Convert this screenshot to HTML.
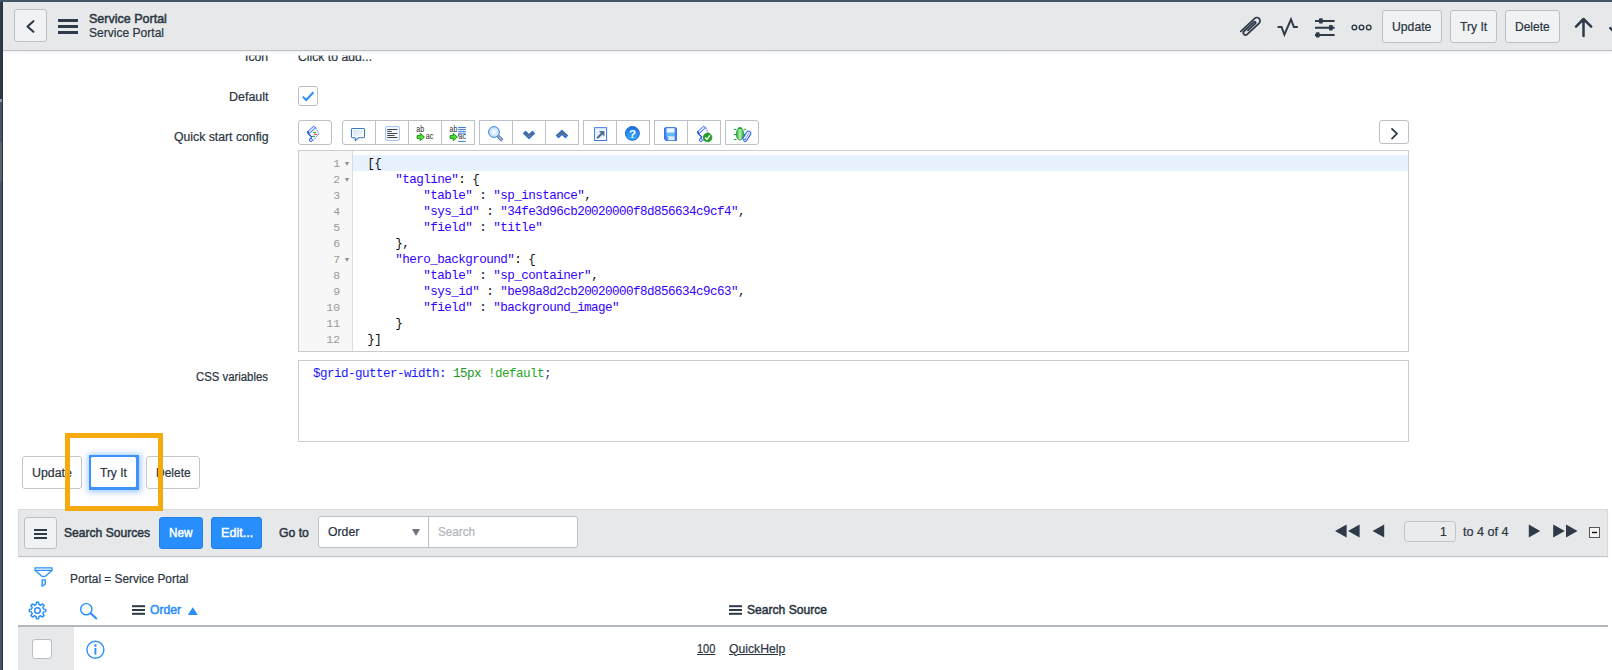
<!DOCTYPE html>
<html lang="en">
<head>
<meta charset="utf-8">
<title>Service Portal</title>
<style>
html,body{margin:0;padding:0;}
body{width:1612px;height:670px;overflow:hidden;background:#fff;position:relative;
  font-family:"Liberation Sans",sans-serif;color:#2e3a47;font-size:12px;}
.abs{position:absolute;}
.t{position:absolute;white-space:nowrap;line-height:1;transform-origin:0 0;}
svg{position:absolute;overflow:visible;}
/* chrome strips */
#topstrip{left:0;top:0;width:1612px;height:2px;background:#455464;}
#leftstrip{left:0;top:2px;width:3px;height:668px;background:#2f3a46;}
/* header */
#hdr{left:3px;top:2px;width:1609px;height:48px;background:#e6e8ea;border-bottom:1px solid #bdc0c4;}
#hdrshadow{left:3px;top:51px;width:1609px;height:3px;background:linear-gradient(#f0f1f2,#fff);}
.hbtn{position:absolute;box-sizing:border-box;border:1px solid #bbc0c6;border-radius:3px;background:#f1f2f4;}
/* form */
.btn{position:absolute;box-sizing:border-box;border:1px solid #c4c8cc;border-radius:3px;background:#fff;}
.tb{position:absolute;box-sizing:border-box;border:1px solid #bdc0c4;background:#fff;top:120px;height:25px;width:34px;}
.mono{font-family:"Liberation Mono",monospace;font-size:12.6px;letter-spacing:-0.56px;white-space:pre;line-height:16px;margin:0;}
.s{color:#3300ff;}
.ln{position:absolute;left:299px;width:41.2px;text-align:right;color:#999;font-size:11.5px;letter-spacing:0.1px;}
</style>
</head>
<body>
<div class="abs" id="topstrip"></div>
<div class="abs" id="leftstrip"></div>
<div class="abs" style="left:0;top:99px;width:2px;height:3px;background:#8d97a3;"></div>
<div class="abs" style="left:0;top:102px;width:2px;height:568px;background:#455569;"></div>
<div class="abs" style="left:0;top:141.5px;width:2px;height:39.7px;background:#58626c;"></div>
<div class="abs" style="left:2px;top:2px;width:1px;height:668px;background:#263141;"></div>
<div class="abs" id="hdr"></div>
<div class="abs" id="hdrshadow"></div>

<!-- header left -->
<div class="hbtn" style="left:14px;top:9px;width:33px;height:33px;"></div>
<svg style="left:14px;top:9px;" width="33" height="33" viewBox="0 0 33 33"><path d="M19.4 12.2 L13.5 17.5 L19.4 22.8" fill="none" stroke="#2e3a47" stroke-width="2.1" stroke-linecap="round" stroke-linejoin="round"/></svg>
<div class="abs" style="left:58px;top:19px;width:20px;height:3px;background:#2e3a47;"></div>
<div class="abs" style="left:58px;top:25px;width:20px;height:3px;background:#2e3a47;"></div>
<div class="abs" style="left:58px;top:31px;width:20px;height:3px;background:#2e3a47;"></div>

<!-- header right buttons -->
<div class="hbtn" style="left:1382px;top:10px;width:60px;height:33px;"></div>
<div class="hbtn" style="left:1450px;top:10px;width:47px;height:33px;"></div>
<div class="hbtn" style="left:1505px;top:10px;width:55px;height:33px;"></div>
<svg style="left:0;top:0;" width="1612" height="60" viewBox="0 0 1612 60" fill="none" stroke="#2e3a47" stroke-linecap="round" stroke-linejoin="round">
<g transform="translate(1250.7,26.6) rotate(-43)" stroke-width="1.75"><path d="M-10.4 -3.3 H8.3 A3.3 3.3 0 0 1 8.3 3.3 H-8 A2.2 2.2 0 0 1 -8 -1.1 H5.6 A1 1 0 0 1 5.6 0.9 H-4.5"/></g>
<polyline points="1277.6,27 1281.5,27 1284.4,34.6 1291,19.4 1293.9,27 1297.8,27" stroke-width="2" stroke-linecap="butt" stroke-linejoin="miter"/>
<g stroke-width="2" stroke-linecap="butt"><path d="M1315 20.9H1334.6M1315 27.7H1334.6M1315 34.9H1334.6"/></g>
<g fill="#2e3a47" stroke="none"><rect x="1319" y="18.2" width="3.8" height="5.4" rx="0.8"/><rect x="1329" y="25" width="3.8" height="5.4" rx="0.8"/><rect x="1315.8" y="32.2" width="3.8" height="5.4" rx="0.8"/></g>
<g stroke-width="1.4"><circle cx="1354.4" cy="27.4" r="2.3"/><circle cx="1361.5" cy="27.4" r="2.3"/><circle cx="1368.7" cy="27.4" r="2.3"/></g>
<path d="M1583.5 36 V19.2 M1576 26.6 L1583.5 19 L1591.2 26.6" stroke-width="2.5"/>
<path d="M1618 18.5 V35.8 M1610.4 28.2 L1618 35.8 L1625.6 28.2" stroke-width="2.5"/>
</svg>

<!-- form -->
<div class="btn" style="left:298px;top:86px;width:20px;height:20px;border-color:#b9bec4;"></div>
<svg style="left:298px;top:86px;" width="20" height="20" viewBox="0 0 20 20"><path d="M4.8 10.6 L8.2 14 L15.4 6.2" fill="none" stroke="#278efc" stroke-width="2"/></svg>

<!-- toolbar -->
<div class="tb" style="left:298px;border-radius:3px;"></div>
<div class="tb" style="left:342px;border-radius:3px 0 0 3px;"></div>
<div class="tb" style="left:375px;"></div>
<div class="tb" style="left:408px;"></div>
<div class="tb" style="left:441px;"></div>
<div class="tb" style="left:479px;"></div>
<div class="tb" style="left:512px;"></div>
<div class="tb" style="left:545px;"></div>
<div class="tb" style="left:583px;"></div>
<div class="tb" style="left:616px;"></div>
<div class="tb" style="left:654px;"></div>
<div class="tb" style="left:687px;"></div>
<div class="tb" style="left:725px;border-radius:0 3px 3px 0;"></div>
<!--TBICONS_START--><svg style="left:0;top:0;" width="1612" height="160" viewBox="0 0 1612 160">
<defs>
<linearGradient id="gbub" x1="0" y1="0" x2="1" y2="1"><stop offset="0" stop-color="#cfe0f6"/><stop offset="1" stop-color="#ffffff"/></linearGradient>
<radialGradient id="glens" cx="0.5" cy="0.5" r="0.6"><stop offset="0" stop-color="#ffffff"/><stop offset="1" stop-color="#a9d3ff"/></radialGradient>
<linearGradient id="ghelp" x1="0" y1="0" x2="0" y2="1"><stop offset="0" stop-color="#1a6fe2"/><stop offset="1" stop-color="#35b2ff"/></linearGradient>
<linearGradient id="gchev" x1="0" y1="0" x2="0" y2="1"><stop offset="0" stop-color="#555"/><stop offset="1" stop-color="#888"/></linearGradient>
<linearGradient id="gbug" x1="0" y1="0" x2="1" y2="0"><stop offset="0" stop-color="#1fa12f"/><stop offset="0.5" stop-color="#b8f2b0"/><stop offset="1" stop-color="#1fa12f"/></linearGradient>
<g id="scroll">
 <path d="M1 6.8 L8.8 1.6 L11.9 7.9 L5.6 14.8 L4 13.6 L4.6 11.2 Z" fill="#f6f9ff"/>
 <path d="M8.9 1.9 L11.9 7.9 L5.9 14.9" fill="none" stroke="#4b78f5" stroke-width="0.9" stroke-dasharray="1.7 0.7"/>
 <path d="M0.7 7 L4.7 11.1 L2.8 13.1" fill="none" stroke="#1d46d8" stroke-width="1.1"/>
 <path d="M0.5 5.7 L6.4 0.4 L8.9 1.6 L2.3 7.4 Z" fill="#dbe8fd" stroke="#2a5cf0" stroke-width="0.9" stroke-linejoin="round"/>
 <path d="M0.5 5.3 L1.8 7.4" stroke="#1538c0" stroke-width="1.3"/>
 <circle cx="3.9" cy="14.1" r="1.5" fill="#f0f5ff" stroke="#2558ee" stroke-width="0.9"/>
</g>
<g id="garrow"><path d="M0.3 2.6 H3.4 V0.3 L7.6 4 L3.4 7.7 V5.4 H0.3 Z" fill="#55dd33" stroke="#0c8c0c" stroke-width="0.9" stroke-linejoin="round"/></g>
</defs>
<!-- 1 script -->
<use href="#scroll" x="307" y="126"/>
<path d="M313 132.4h3" stroke="#22bb22" stroke-width="1.1"/><path d="M314.2 134.4h3" stroke="#ee3311" stroke-width="1.1"/><path d="M312 136.4h3" stroke="#22bb22" stroke-width="1.1"/>
<!-- 2 comment -->
<path d="M352.7 128.5 H363.3 Q364.5 128.5 364.5 129.7 V136.5 Q364.5 137.7 363.3 137.7 H358.6 L355.4 140.6 L355.2 137.7 H352.7 Q351.5 137.7 351.5 136.5 V129.7 Q351.5 128.5 352.7 128.5 Z" fill="url(#gbub)" stroke="#3478c6" stroke-width="1.1" stroke-linejoin="round"/>
<rect x="352.6" y="129.6" width="10.8" height="7" fill="none" stroke="#fff" stroke-width="0.9"/>
<!-- 3 format -->
<rect x="385.5" y="126.5" width="14" height="14" rx="1.5" fill="#f3f7ff" stroke="#a6c2fb" stroke-width="1"/>
<path d="M387.2 129.5H397.4M387.2 131.4H391.8M387.2 133.5H397.4M387.2 135.5H394.6M387.2 137.5H397.4" stroke="#444" stroke-width="1"/>
<!-- 4 replace -->
<text x="416.3" y="131.6" font-family="Liberation Sans, sans-serif" font-size="8.4" fill="#2b2b2b" textLength="7.8" lengthAdjust="spacingAndGlyphs">ab</text>
<use href="#garrow" x="416.8" y="133"/>
<text x="425.7" y="138.9" font-family="Liberation Sans, sans-serif" font-size="8.4" fill="#2b2b2b" textLength="7.6" lengthAdjust="spacingAndGlyphs">ac</text>
<!-- 5 replace all -->
<text x="449.5" y="131.6" font-family="Liberation Sans, sans-serif" font-size="8.4" fill="#2b2b2b" textLength="7.8" lengthAdjust="spacingAndGlyphs">ab</text>
<path d="M458.2 127.5H465.8M458.2 129.4H465.8M458.2 131.3H465.8M458.2 133.2H465.8M458.2 141.4H465.8M458.5 134V136.5" stroke="#3a7bd5" stroke-width="1"/>
<use href="#garrow" x="449.8" y="133"/>
<text x="458.6" y="138.9" font-family="Liberation Sans, sans-serif" font-size="8.4" fill="#2b2b2b" textLength="7.6" lengthAdjust="spacingAndGlyphs">ac</text>
<!-- 6 search -->
<path d="M498 136 L502.2 140.4" stroke="#3c4c60" stroke-width="3.2" stroke-linecap="butt"/>
<path d="M498.4 136.4 L501.9 140.1" stroke="#8fc2ff" stroke-width="1.8" stroke-linecap="butt"/>
<circle cx="494" cy="132" r="5.4" fill="url(#glens)" stroke="#3f84d8" stroke-width="1"/>
<!-- 7 down / 8 up -->
<path d="M523.6 133.4 L525.6 131.4 L529 134.7 L532.4 131.4 L534.5 133.4 L529 138.5 Z" fill="url(#gchev)" stroke="#2a6fd6" stroke-width="1.25" stroke-linejoin="round"/>
<path d="M556.5 135.5 L562 130.4 L567.4 135.5 L565.4 137.5 L562 134.2 L558.6 137.5 Z" fill="url(#gchev)" stroke="#2a6fd6" stroke-width="1.25" stroke-linejoin="round"/>
<!-- 9 fullscreen -->
<rect x="594.6" y="127.7" width="12" height="12.8" fill="#fdfeff" stroke="#3a72e8" stroke-width="1"/>
<rect x="595.1" y="128.2" width="11" height="1.6" fill="#cfe4ff"/>
<rect x="596.2" y="131.2" width="8" height="6.2" fill="#e6eefb"/>
<path d="M597.2 138.2 L602.4 133" stroke="#4a6a94" stroke-width="2"/>
<path d="M598.9 131 H604.4 V136.5 Z" fill="#4a6a94"/>
<!-- 10 help -->
<circle cx="632.4" cy="133.4" r="6.9" fill="url(#ghelp)" stroke="#1560d0" stroke-width="1"/>
<text x="632.4" y="137.6" text-anchor="middle" font-family="Liberation Sans, sans-serif" font-weight="bold" font-size="11.5" fill="#fff">?</text>
<!-- 11 save -->
<path d="M664.6 128.7 Q664.6 127.7 665.6 127.7 H675.4 Q676.4 127.7 676.4 128.7 V140.5 H666 L664.6 139.2 Z" fill="#4488f6" stroke="#2a66e6" stroke-width="1"/>
<rect x="666.5" y="128.2" width="8.1" height="4.6" fill="#eef6ff"/>
<rect x="666.5" y="132.8" width="8.1" height="3.2" fill="#62bbf8"/>
<rect x="667.2" y="136.2" width="7.4" height="4.1" fill="#e1ebfb"/>
<rect x="667.4" y="137" width="0.9" height="3.3" fill="#3b7cf0"/>
<!-- 12 script check -->
<use href="#scroll" x="697" y="126"/>
<circle cx="707.6" cy="137.5" r="4.4" fill="#22a022" stroke="#168a16" stroke-width="0.6"/>
<path d="M705.2 137.4 L707 139.4 L710 135.4" fill="none" stroke="#fff" stroke-width="1.5"/>
<!-- 13 bug -->
<path d="M734 129.4h2.4M733.6 134.6h2.6M734 139.5h2.4M743.6 129.4h2.6M743.8 134.6h2" stroke="#1fa12f" stroke-width="1"/>
<ellipse cx="740" cy="128.6" rx="2.2" ry="1.6" fill="#1fa12f"/>
<ellipse cx="740" cy="134.2" rx="3.8" ry="5.8" fill="url(#gbug)" stroke="#1a9a2a" stroke-width="0.8"/>
<g transform="translate(746.9,136) rotate(-58)"><rect x="-5.2" y="-2.2" width="10.4" height="4.4" rx="1.6" fill="#eef4ff" stroke="#2558ee" stroke-width="1"/><path d="M-3.6 0.2 H3.8" stroke="#6f95f7" stroke-width="0.8"/></g><circle cx="745" cy="140.6" r="1.2" fill="#eef4ff" stroke="#2558ee" stroke-width="0.9"/>
</svg>
<!--TBICONS_END-->
<div class="btn" style="left:1379px;top:120px;width:30px;height:24px;border-color:#bdc0c4;"></div>
<svg style="left:1379px;top:120px;" width="30" height="24" viewBox="0 0 30 24"><path d="M13 8.8 L18 13.7 L13 18.6" fill="none" stroke="#2e3a47" stroke-width="1.8" stroke-linecap="round" stroke-linejoin="round"/></svg>

<!-- editor -->
<div class="abs" style="left:298px;top:150px;width:1111px;height:202px;box-sizing:border-box;border:1px solid #ccc;background:#fff;"></div>
<div class="abs" style="left:299px;top:151px;width:53px;height:200px;background:#f7f7f7;border-right:1px solid #ddd;"></div>
<div class="abs" style="left:353px;top:155px;width:1055px;height:16px;background:#e8f2ff;"></div>
<pre class="mono ln" style="top:156px;">1
2
3
4
5
6
7
8
9
10
11
12</pre>
<div class="abs" style="left:345px;top:162px;width:0;height:0;border-left:2.3px solid transparent;border-right:2.3px solid transparent;border-top:4.2px solid #8a8a8a;"></div>
<div class="abs" style="left:345px;top:178px;width:0;height:0;border-left:2.3px solid transparent;border-right:2.3px solid transparent;border-top:4.2px solid #8a8a8a;"></div>
<div class="abs" style="left:345px;top:258px;width:0;height:0;border-left:2.3px solid transparent;border-right:2.3px solid transparent;border-top:4.2px solid #8a8a8a;"></div>
<pre class="mono abs" style="left:367.2px;top:156px;color:#111;">[{
    <span class="s">"tagline"</span>: {
        <span class="s">"table"</span> : <span class="s">"sp_instance"</span>,
        <span class="s">"sys_id"</span> : <span class="s">"34fe3d96cb20020000f8d856634c9cf4"</span>,
        <span class="s">"field"</span> : <span class="s">"title"</span>
    },
    <span class="s">"hero_background"</span>: {
        <span class="s">"table"</span> : <span class="s">"sp_container"</span>,
        <span class="s">"sys_id"</span> : <span class="s">"be98a8d2cb20020000f8d856634c9c63"</span>,
        <span class="s">"field"</span> : <span class="s">"background_image"</span>
    }
}]</pre>

<!-- css variables -->
<div class="abs" style="left:298px;top:360px;width:1111px;height:82px;box-sizing:border-box;border:1px solid #ccc;background:#fff;"></div>
<pre class="mono abs" style="left:313px;top:366px;color:#1a1aff;">$grid-gutter-width: <span style="color:#1a961a">15px</span> <span style="color:#1fa81f">!default</span><span style="color:#2b3aa0">;</span></pre>

<!-- bottom buttons -->
<div class="btn" style="left:22px;top:456px;width:60px;height:33px;"></div>
<div class="abs" style="left:89.2px;top:455.1px;width:49.8px;height:34.6px;background:#3d93fb;box-shadow:0 0 6px 1.5px rgba(61,147,251,.5);"></div>
<div class="abs" style="left:91.4px;top:457.4px;width:45.1px;height:30px;background:#fff;border-radius:1.5px;"></div>
<div class="btn" style="left:146px;top:456px;width:54px;height:33px;"></div>

<!-- related list toolbar -->
<div class="abs" style="left:18px;top:509px;width:1590px;height:48px;box-sizing:border-box;background:#e6e8ea;border:1px solid #d8dbde;border-bottom:1px solid #c0c4c8;box-shadow:0 1px 2px rgba(0,0,0,.05);"></div>
<div class="hbtn" style="left:24px;top:517px;width:33px;height:32px;"></div>
<div class="abs" style="left:34px;top:529px;width:13px;height:2px;background:#2e3a47;"></div>
<div class="abs" style="left:34px;top:533px;width:13px;height:2px;background:#2e3a47;"></div>
<div class="abs" style="left:34px;top:537px;width:13px;height:2px;background:#2e3a47;"></div>
<div class="abs" style="left:159px;top:517px;width:44px;height:32px;background:#278efc;border-radius:3px;box-sizing:border-box;border:1px solid #1f80ea;"></div>
<div class="abs" style="left:211px;top:517px;width:51px;height:32px;background:#278efc;border-radius:3px;box-sizing:border-box;border:1px solid #1f80ea;"></div>
<div class="btn" style="left:318px;top:516px;width:260px;height:32px;border-color:#bdc0c4;"></div>
<div class="abs" style="left:428px;top:517px;width:1px;height:30px;background:#bdc0c4;"></div>
<div class="abs" style="left:411.5px;top:529px;width:0;height:0;border-left:4px solid transparent;border-right:4px solid transparent;border-top:7.5px solid #6b737c;"></div>
<!--PAGER-->

<!-- filter + columns -->
<!--LISTICONS_START--><svg style="left:0;top:500px;" width="1612" height="170" viewBox="0 500 1612 170">
<!-- pager -->
<g fill="#2e3a47">
<path d="M1335 531 L1346.6 524.6 V537.5 Z"/><path d="M1348 531 L1359.6 524.6 V537.5 Z"/>
<path d="M1372.6 531 L1384.2 524.6 V537.5 Z"/>
<path d="M1540.2 531 L1528.8 524.6 V537.5 Z"/>
<path d="M1564.8 531 L1553.2 524.6 V537.5 Z"/><path d="M1577.6 531 L1566 524.6 V537.5 Z"/>
</g>
<rect x="1404.5" y="521.5" width="51" height="20" rx="3" fill="#e9ebed" stroke="#c1c5c9" stroke-width="1"/>
<rect x="1589.5" y="527.5" width="10" height="10" fill="#f4f4f4" stroke="#555" stroke-width="1"/>
<rect x="1592" y="531.8" width="5" height="1.4" fill="#111"/>
<!-- funnel -->
<g fill="none" stroke="#278efc" stroke-width="1.4" stroke-linejoin="round">
<rect x="35" y="567.8" width="17.1" height="2.6" stroke-width="1.15"/><path d="M35.6 570.8 L41.5 576 Q43.6 577 45.7 576 L51.6 570.8" stroke-linecap="round" stroke-width="1.3"/><path d="M42.1 579.8 H45.3 V584.3 L42.1 586.3 Z" stroke-width="1.3" fill="#d9f3ff"/>
</g>
<!-- gear -->
<g fill="none" stroke="#278efc" stroke-width="1.45" stroke-linejoin="round" transform="translate(-0.2,0.3)">
<path d="M45.9 609.1 L45.9 611.3 L43.7 611.6 L43.0 613.4 L44.3 615.2 L42.7 616.8 L40.9 615.5 L39.1 616.2 L38.8 618.4 L36.6 618.4 L36.3 616.2 L34.5 615.5 L32.7 616.8 L31.1 615.2 L32.4 613.4 L31.7 611.6 L29.5 611.3 L29.5 609.1 L31.7 608.8 L32.4 607.0 L31.1 605.2 L32.7 603.6 L34.5 604.9 L36.3 604.2 L36.6 602.0 L38.8 602.0 L39.1 604.2 L40.9 604.9 L42.7 603.6 L44.3 605.2 L43.0 607.0 L43.7 608.8 Z"/>
<circle cx="37.7" cy="610.2" r="2.8"/>
</g>
<!-- search -->
<circle cx="86.3" cy="609.2" r="5.6" fill="none" stroke="#278efc" stroke-width="1.4"/>
<path d="M90.6 613.2 L96.3 618.4" stroke="#278efc" stroke-width="2" stroke-linecap="round"/>
<!-- hamburgers -->
<g fill="#2e3a47">
<rect x="132" y="605.2" width="13" height="2"/><rect x="132" y="609" width="13" height="2"/><rect x="132" y="612.8" width="13" height="2"/>
<rect x="729" y="605.2" width="13" height="2"/><rect x="729" y="609" width="13" height="2"/><rect x="729" y="612.8" width="13" height="2"/>
</g>
<path d="M187.8 614.9 L192.8 607.2 L197.8 614.9 Z" fill="#278efc"/>
<!-- info -->
<circle cx="95.4" cy="649.8" r="8.5" fill="none" stroke="#278efc" stroke-width="1.4"/>
<circle cx="95.4" cy="645.5" r="1.25" fill="#278efc"/>
<rect x="94.45" y="648" width="1.9" height="6.6" fill="#278efc"/>
</svg>
<!--LISTICONS_END-->
<div class="abs" style="left:18px;top:625px;width:1590px;height:2px;background:#b3b8be;"></div>
<div class="abs" style="left:18px;top:627px;width:56px;height:43px;background:#e6e8ea;"></div>
<div class="btn" style="left:32px;top:639px;width:20px;height:20px;border-color:#b9bec4;"></div>


<span class="t" style="left:89.16px;top:12.0px;font-size:13.5px;-webkit-text-stroke:0.5px;color:#2a3541;transform:scaleX(0.9267);">Service Portal</span>
<span class="t" style="left:89.12px;top:26.2px;font-size:13.5px;-webkit-text-stroke:0.22px;color:#2a3541;transform:scaleX(0.8928);">Service Portal</span>
<span class="t" style="left:1392.17px;top:20.1px;font-size:13px;-webkit-text-stroke:0.22px;color:#2a3541;transform:scaleX(0.9386);">Update</span>
<span class="t" style="left:1459.83px;top:20.1px;font-size:13px;-webkit-text-stroke:0.22px;color:#2a3541;transform:scaleX(0.9355);">Try It</span>
<span class="t" style="left:1515.29px;top:20.1px;font-size:13px;-webkit-text-stroke:0.22px;color:#2a3541;transform:scaleX(0.9246);">Delete</span>
<span class="t" style="left:244.95px;top:51.2px;font-size:12.5px;-webkit-text-stroke:0.22px;color:#2a3541;transform:scaleX(0.9789);clip-path:inset(4.40px 0 0 0);">Icon</span>
<span class="t" style="left:298.02px;top:51.2px;font-size:12.5px;-webkit-text-stroke:0.22px;color:#2a3541;transform:scaleX(0.9776);clip-path:inset(4.40px 0 0 0);">Click to add...</span>
<span class="t" style="left:228.69px;top:90.6px;font-size:12.5px;-webkit-text-stroke:0.22px;color:#2a3541;transform:scaleX(0.9983);">Default</span>
<span class="t" style="left:173.75px;top:130.8px;font-size:12.5px;-webkit-text-stroke:0.22px;color:#2a3541;transform:scaleX(0.9792);">Quick start config</span>
<span class="t" style="left:196.05px;top:370.8px;font-size:12.5px;-webkit-text-stroke:0.22px;color:#2a3541;transform:scaleX(0.9085);">CSS variables</span>
<span class="t" style="left:32.15px;top:466.6px;font-size:12.5px;-webkit-text-stroke:0.22px;color:#2a3541;transform:scaleX(0.9895);">Update</span>
<span class="t" style="left:100.12px;top:466.6px;font-size:12.5px;-webkit-text-stroke:0.22px;color:#2a3541;transform:scaleX(0.9590);">Try It</span>
<span class="t" style="left:156.20px;top:466.6px;font-size:12.5px;-webkit-text-stroke:0.22px;color:#2a3541;transform:scaleX(0.9581);">Delete</span>
<span class="t" style="left:64.28px;top:525.7px;font-size:13.5px;-webkit-text-stroke:0.5px;color:#2a3541;transform:scaleX(0.8954);">Search Sources</span>
<span class="t" style="left:169.07px;top:525.7px;font-size:13.5px;-webkit-text-stroke:0.5px;color:#fff;transform:scaleX(0.8681);">New</span>
<span class="t" style="left:221.06px;top:525.7px;font-size:13.5px;-webkit-text-stroke:0.5px;color:#fff;transform:scaleX(0.9346);">Edit...</span>
<span class="t" style="left:279.27px;top:525.7px;font-size:13.5px;-webkit-text-stroke:0.5px;color:#2a3541;transform:scaleX(0.9044);">Go to</span>
<span class="t" style="left:328.24px;top:525.8px;font-size:12.5px;-webkit-text-stroke:0.22px;color:#2a3541;transform:scaleX(0.9793);">Order</span>
<span class="t" style="left:437.64px;top:525.8px;font-size:12.5px;-webkit-text-stroke:0.22px;color:#b0b6bc;transform:scaleX(0.9349);">Search</span>
<span class="t" style="left:1439.55px;top:525.8px;font-size:12.5px;-webkit-text-stroke:0.22px;color:#2a3541;transform:scaleX(0.9805);">1</span>
<span class="t" style="left:1463.38px;top:525.8px;font-size:12.5px;-webkit-text-stroke:0.22px;color:#2a3541;transform:scaleX(1.0087);">to 4 of 4</span>
<span class="t" style="left:70.40px;top:572.6px;font-size:12.5px;-webkit-text-stroke:0.22px;color:#2a3541;transform:scaleX(0.9499);">Portal = Service Portal</span>
<span class="t" style="left:149.58px;top:602.5px;font-size:13px;-webkit-text-stroke:0.5px;color:#278efc;transform:scaleX(0.9353);">Order</span>
<span class="t" style="left:746.67px;top:602.5px;font-size:13px;-webkit-text-stroke:0.5px;color:#2a3541;transform:scaleX(0.9307);">Search Source</span>
<span class="t" style="left:696.60px;top:642.6px;font-size:12.5px;-webkit-text-stroke:0.22px;color:#2a3541;transform:scaleX(0.8810);text-decoration:underline;">100</span>
<span class="t" style="left:728.72px;top:642.6px;font-size:12.5px;-webkit-text-stroke:0.22px;color:#2a3541;transform:scaleX(0.9758);text-decoration:underline;">QuickHelp</span>
<!-- highlight box -->
<div class="abs" style="left:65px;top:433px;width:98px;height:78px;box-sizing:border-box;border:5px solid #f5a90b;"></div>
</body>
</html>
